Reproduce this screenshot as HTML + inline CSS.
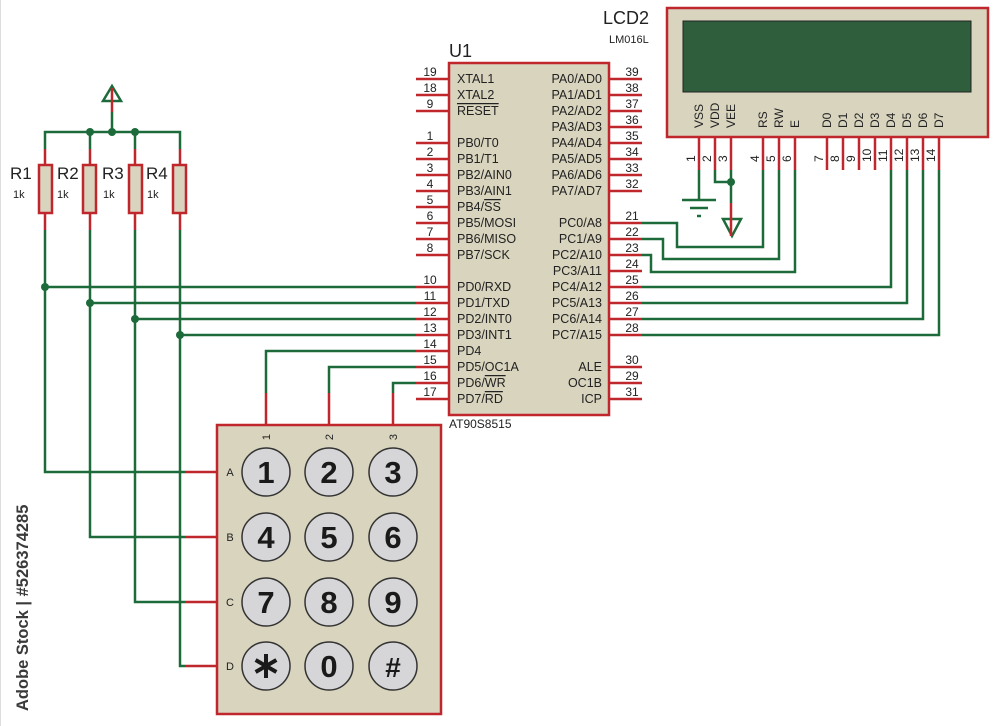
<!DOCTYPE html>
<html><head><meta charset="utf-8"><style>
html,body{margin:0;padding:0;background:#fff}
svg{display:block}
text{font-family:"Liberation Sans",sans-serif}
</style></head><body>
<svg width="1000" height="726" viewBox="0 0 1000 726" xmlns="http://www.w3.org/2000/svg">
<rect x="0" y="0" width="1000" height="726" fill="#fff"/>
<line x1="0.5" y1="0" x2="0.5" y2="726" stroke="#ddd"/>
<text transform="translate(28,711) rotate(-90)" font-size="16.5" font-weight="bold" fill="#3a3a3a">Adobe Stock | #526374285</text>

<!-- U1 -->
<text x="449" y="57" font-size="18" fill="#222">U1</text>
<rect x="449" y="63" width="160" height="352" fill="#d9d4be" stroke="#c0272d" stroke-width="2.5"/>
<text x="449" y="428" font-size="12" fill="#222">AT90S8515</text>
<g stroke="#c0272d" stroke-width="2.5">
<line x1="416" y1="79" x2="449" y2="79"/><line x1="416" y1="95" x2="449" y2="95"/><line x1="416" y1="111" x2="449" y2="111"/>
<line x1="416" y1="143" x2="449" y2="143"/><line x1="416" y1="159" x2="449" y2="159"/><line x1="416" y1="175" x2="449" y2="175"/><line x1="416" y1="191" x2="449" y2="191"/>
<line x1="416" y1="207" x2="449" y2="207"/><line x1="416" y1="223" x2="449" y2="223"/><line x1="416" y1="239" x2="449" y2="239"/><line x1="416" y1="255" x2="449" y2="255"/>
<line x1="416" y1="287" x2="449" y2="287"/><line x1="416" y1="303" x2="449" y2="303"/><line x1="416" y1="319" x2="449" y2="319"/><line x1="416" y1="335" x2="449" y2="335"/>
<line x1="416" y1="351" x2="449" y2="351"/><line x1="416" y1="367" x2="449" y2="367"/><line x1="416" y1="383" x2="449" y2="383"/><line x1="416" y1="399" x2="449" y2="399"/>
<line x1="609" y1="79" x2="642" y2="79"/><line x1="609" y1="95" x2="642" y2="95"/><line x1="609" y1="111" x2="642" y2="111"/><line x1="609" y1="127" x2="642" y2="127"/>
<line x1="609" y1="143" x2="642" y2="143"/><line x1="609" y1="159" x2="642" y2="159"/><line x1="609" y1="175" x2="642" y2="175"/><line x1="609" y1="191" x2="642" y2="191"/>
<line x1="609" y1="223" x2="642" y2="223"/><line x1="609" y1="239" x2="642" y2="239"/><line x1="609" y1="255" x2="642" y2="255"/><line x1="609" y1="271" x2="642" y2="271"/>
<line x1="609" y1="287" x2="642" y2="287"/><line x1="609" y1="303" x2="642" y2="303"/><line x1="609" y1="319" x2="642" y2="319"/><line x1="609" y1="335" x2="642" y2="335"/>
<line x1="609" y1="367" x2="642" y2="367"/><line x1="609" y1="383" x2="642" y2="383"/><line x1="609" y1="399" x2="642" y2="399"/>
</g>
<g font-size="12" fill="#222" text-anchor="middle">
<text x="430" y="76">19</text><text x="430" y="92">18</text><text x="430" y="108">9</text>
<text x="430" y="140">1</text><text x="430" y="156">2</text><text x="430" y="172">3</text><text x="430" y="188">4</text>
<text x="430" y="204">5</text><text x="430" y="220">6</text><text x="430" y="236">7</text><text x="430" y="252">8</text>
<text x="430" y="284">10</text><text x="430" y="300">11</text><text x="430" y="316">12</text><text x="430" y="332">13</text>
<text x="430" y="348">14</text><text x="430" y="364">15</text><text x="430" y="380">16</text><text x="430" y="396">17</text>
<text x="632" y="76">39</text><text x="632" y="92">38</text><text x="632" y="108">37</text><text x="632" y="124">36</text>
<text x="632" y="140">35</text><text x="632" y="156">34</text><text x="632" y="172">33</text><text x="632" y="188">32</text>
<text x="632" y="220">21</text><text x="632" y="236">22</text><text x="632" y="252">23</text><text x="632" y="268">24</text>
<text x="632" y="284">25</text><text x="632" y="300">26</text><text x="632" y="316">27</text><text x="632" y="332">28</text>
<text x="632" y="364">30</text><text x="632" y="380">29</text><text x="632" y="396">31</text>
</g>
<g font-size="12.5" fill="#222">
<text x="457" y="83">XTAL1</text><text x="457" y="99">XTAL2</text><text x="457" y="115" text-decoration="overline">RESET</text>
<text x="457" y="147">PB0/T0</text><text x="457" y="163">PB1/T1</text><text x="457" y="179">PB2/AIN0</text><text x="457" y="195">PB3/AIN1</text>
<text x="457" y="211">PB4/<tspan text-decoration="overline">SS</tspan></text><text x="457" y="227">PB5/MOSI</text><text x="457" y="243">PB6/MISO</text><text x="457" y="259">PB7/SCK</text>
<text x="457" y="291">PD0/RXD</text><text x="457" y="307">PD1/TXD</text><text x="457" y="323">PD2/INT0</text><text x="457" y="339">PD3/INT1</text>
<text x="457" y="355">PD4</text><text x="457" y="371">PD5/OC1A</text><text x="457" y="387">PD6/<tspan text-decoration="overline">WR</tspan></text><text x="457" y="403">PD7/<tspan text-decoration="overline">RD</tspan></text>
</g>
<g font-size="12.5" fill="#222" text-anchor="end">
<text x="602" y="83">PA0/AD0</text><text x="602" y="99">PA1/AD1</text><text x="602" y="115">PA2/AD2</text><text x="602" y="131">PA3/AD3</text>
<text x="602" y="147">PA4/AD4</text><text x="602" y="163">PA5/AD5</text><text x="602" y="179">PA6/AD6</text><text x="602" y="195">PA7/AD7</text>
<text x="602" y="227">PC0/A8</text><text x="602" y="243">PC1/A9</text><text x="602" y="259">PC2/A10</text><text x="602" y="275">PC3/A11</text>
<text x="602" y="291">PC4/A12</text><text x="602" y="307">PC5/A13</text><text x="602" y="323">PC6/A14</text><text x="602" y="339">PC7/A15</text>
<text x="602" y="371">ALE</text><text x="602" y="387">OC1B</text><text x="602" y="403">ICP</text>
</g>

<!-- LCD -->
<text x="603" y="24" font-size="18" fill="#222">LCD2</text>
<text x="609" y="43" font-size="11" fill="#222">LM016L</text>
<rect x="667" y="8" width="321" height="129" fill="#d9d4be" stroke="#c0272d" stroke-width="2.5"/>
<rect x="683" y="21" width="288" height="71" fill="#2f5e3c" stroke="#222" stroke-width="1"/>
<g font-size="12" fill="#222">
<text transform="translate(703,128) rotate(-90)">VSS</text><text transform="translate(719,128) rotate(-90)">VDD</text><text transform="translate(735,128) rotate(-90)">VEE</text>
<text transform="translate(767,128) rotate(-90)">RS</text><text transform="translate(783,128) rotate(-90)">RW</text><text transform="translate(799,128) rotate(-90)">E</text>
<text transform="translate(831,128) rotate(-90)">D0</text><text transform="translate(847,128) rotate(-90)">D1</text><text transform="translate(863,128) rotate(-90)">D2</text><text transform="translate(879,128) rotate(-90)">D3</text>
<text transform="translate(895,128) rotate(-90)">D4</text><text transform="translate(911,128) rotate(-90)">D5</text><text transform="translate(927,128) rotate(-90)">D6</text><text transform="translate(943,128) rotate(-90)">D7</text>
<text transform="translate(695,162) rotate(-90)">1</text><text transform="translate(711,162) rotate(-90)">2</text><text transform="translate(727,162) rotate(-90)">3</text>
<text transform="translate(759,162) rotate(-90)">4</text><text transform="translate(775,162) rotate(-90)">5</text><text transform="translate(791,162) rotate(-90)">6</text>
<text transform="translate(823,162) rotate(-90)">7</text><text transform="translate(839,162) rotate(-90)">8</text><text transform="translate(855,162) rotate(-90)">9</text><text transform="translate(871,162) rotate(-90)">10</text>
<text transform="translate(887,162) rotate(-90)">11</text><text transform="translate(903,162) rotate(-90)">12</text><text transform="translate(919,162) rotate(-90)">13</text><text transform="translate(935,162) rotate(-90)">14</text>
</g>

<!-- green wires -->
<g stroke="#1d6b3a" stroke-width="2.5" fill="none">
<polyline points="699,170 699,200"/>
<line x1="682" y1="200" x2="716" y2="200"/><line x1="690" y1="208" x2="708" y2="208"/><line x1="697" y1="216" x2="701" y2="216"/>
<polyline points="715,170 715,182 731,182"/>
<polyline points="731,170 731,203"/>
<polyline points="642,223 677,223 677,247 763,247 763,170"/>
<polyline points="642,239 663,239 663,259 779,259 779,170"/>
<polyline points="642,255 651,255 651,272 795,272 795,170"/>
<polyline points="642,287 891,287 891,170"/>
<polyline points="642,303 907,303 907,170"/>
<polyline points="642,319 923,319 923,170"/>
<polyline points="642,335 939,335 939,170"/>
<polyline points="45,149 45,132 180,132 180,149"/>
<line x1="90" y1="132" x2="90" y2="149"/><line x1="135" y1="132" x2="135" y2="149"/>
<line x1="112" y1="132" x2="112" y2="112"/>
<polygon points="103,101 121,101 112,86"/>
<polyline points="45,230 45,472 185,472"/>
<polyline points="90,230 90,537 185,537"/>
<polyline points="135,230 135,602 185,602"/>
<polyline points="180,230 180,666 185,666"/>
<line x1="45" y1="287" x2="416" y2="287"/><line x1="90" y1="303" x2="416" y2="303"/>
<line x1="135" y1="319" x2="416" y2="319"/><line x1="180" y1="335" x2="416" y2="335"/>
<polyline points="416,351 266,351 266,393"/>
<polyline points="416,367 329,367 329,393"/>
<polyline points="416,383 393,383 393,393"/>
<polygon points="723,219 741,219 732,236"/>
</g>
<g fill="#1d6b3a">
<circle cx="731" cy="182" r="4"/><circle cx="90" cy="132" r="4"/><circle cx="112" cy="132" r="4"/><circle cx="135" cy="132" r="4"/>
<circle cx="45" cy="287" r="4"/><circle cx="90" cy="303" r="4"/><circle cx="135" cy="319" r="4"/><circle cx="180" cy="335" r="4"/>
</g>
<g stroke="#c0272d" stroke-width="2.5">
<line x1="699" y1="137" x2="699" y2="170"/><line x1="715" y1="137" x2="715" y2="170"/><line x1="731" y1="137" x2="731" y2="170"/>
<line x1="731" y1="203" x2="731" y2="236"/>
<line x1="763" y1="137" x2="763" y2="170"/><line x1="779" y1="137" x2="779" y2="170"/><line x1="795" y1="137" x2="795" y2="170"/>
<line x1="827" y1="137" x2="827" y2="170"/><line x1="843" y1="137" x2="843" y2="170"/><line x1="859" y1="137" x2="859" y2="170"/><line x1="875" y1="137" x2="875" y2="170"/>
<line x1="891" y1="137" x2="891" y2="170"/><line x1="907" y1="137" x2="907" y2="170"/><line x1="923" y1="137" x2="923" y2="170"/><line x1="939" y1="137" x2="939" y2="170"/>
<line x1="112" y1="112" x2="112" y2="88"/>
<line x1="45" y1="149" x2="45" y2="230"/><line x1="90" y1="149" x2="90" y2="230"/><line x1="135" y1="149" x2="135" y2="230"/><line x1="180" y1="149" x2="180" y2="230"/>
<line x1="266" y1="393" x2="266" y2="425"/><line x1="329" y1="393" x2="329" y2="425"/><line x1="393" y1="393" x2="393" y2="425"/>
<line x1="185" y1="472" x2="217" y2="472"/><line x1="185" y1="537" x2="217" y2="537"/><line x1="185" y1="602" x2="217" y2="602"/><line x1="185" y1="666" x2="217" y2="666"/>
</g>
<g fill="#d9d4be" stroke="#c0272d" stroke-width="2.5">
<rect x="39" y="165" width="13" height="48"/><rect x="83" y="165" width="13" height="48"/><rect x="129" y="165" width="13" height="48"/><rect x="173" y="165" width="13" height="48"/>
</g>
<g fill="#222">
<text x="10" y="179" font-size="17">R1</text><text x="57" y="179" font-size="17">R2</text><text x="102" y="179" font-size="17">R3</text><text x="146" y="179" font-size="17">R4</text>
<text x="13" y="198" font-size="11">1k</text><text x="57" y="198" font-size="11">1k</text><text x="103" y="198" font-size="11">1k</text><text x="147" y="198" font-size="11">1k</text>
</g>

<!-- keypad -->
<rect x="217" y="425" width="224" height="289" fill="#d9d4be" stroke="#c0272d" stroke-width="2.5"/>
<g font-size="11" fill="#222" text-anchor="middle">
<text transform="translate(266,437) rotate(-90)" dy="4">1</text><text transform="translate(329,437) rotate(-90)" dy="4">2</text><text transform="translate(393,437) rotate(-90)" dy="4">3</text>
<text x="230" y="476">A</text><text x="230" y="541">B</text><text x="230" y="606">C</text><text x="230" y="670">D</text>
</g>
<g fill="#d6d6d8" stroke="#333" stroke-width="1.5">
<circle cx="266" cy="472" r="24"/><circle cx="329" cy="472" r="24"/><circle cx="393" cy="472" r="24"/>
<circle cx="266" cy="537" r="24"/><circle cx="329" cy="537" r="24"/><circle cx="393" cy="537" r="24"/>
<circle cx="266" cy="602" r="24"/><circle cx="329" cy="602" r="24"/><circle cx="393" cy="602" r="24"/>
<circle cx="266" cy="666" r="24"/><circle cx="329" cy="666" r="24"/><circle cx="393" cy="666" r="24"/>
</g>
<g font-size="31" font-weight="bold" fill="#1a1a1a" text-anchor="middle">
<text x="266" y="483">1</text><text x="329" y="483">2</text><text x="393" y="483">3</text>
<text x="266" y="548">4</text><text x="329" y="548">5</text><text x="393" y="548">6</text>
<text x="266" y="613">7</text><text x="329" y="613">8</text><text x="393" y="613">9</text>
<text x="329" y="677">0</text><text x="393" y="677" font-size="28">#</text>
</g>
<g stroke="#1a1a1a" stroke-width="4" stroke-linecap="butt">
<line x1="266" y1="654" x2="266" y2="678"/><line x1="255.6" y1="660" x2="276.4" y2="672"/><line x1="255.6" y1="672" x2="276.4" y2="660"/>
</g>
</svg>
</body></html>
